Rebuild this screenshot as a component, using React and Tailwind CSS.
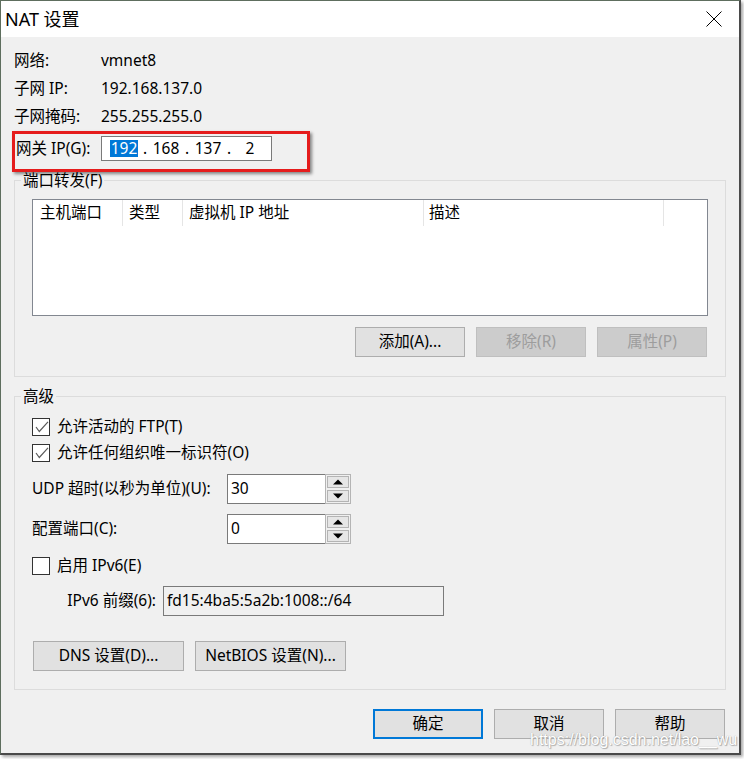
import React from 'react';

const Btn = ({ children, className = '', disabled = false, primary = false }) => (
  <div
    className={`flex h-[30px] items-center justify-center ${
      disabled
        ? 'border border-[#bfbfbf] bg-[#cccccc] text-[#9d9d9d]'
        : primary
          ? 'border-2 border-[#0078d7] bg-[#e1e1e1] text-black'
          : 'border border-[#adadad] bg-[#e1e1e1] text-black'
    } ${className}`}
  >
    {children}
  </div>
);

const Check = ({ checked, label }) => (
  <div className="flex h-[18px] items-center">
    <div className="flex h-[18px] w-[18px] shrink-0 items-center justify-center border border-[#333333] bg-white">
      {checked && (
        <svg width="16" height="16" viewBox="0 0 16 16">
          <path d="M3 8 L6.3 12.5 L15 2.8" fill="none" stroke="#5a5a5a" strokeWidth="1.2" />
        </svg>
      )}
    </div>
    <span className="ml-[7px]">{label}</span>
  </div>
);

const Spin = ({ value }) => (
  <div className="flex h-[30px]">
    <div className="h-[30px] w-[98px] border border-r-0 border-[#7a7a7a] bg-white pl-[3px] pt-[2px] leading-[22px]">
      {value}
    </div>
    <div className="flex h-[30px] w-[26px] flex-col gap-[2px] border border-[#b4b4b4] bg-[#f0f0f0] p-[1px]">
      <div className="flex flex-1 items-center justify-center border border-[#b4b4b4] bg-[#e6e6e6]">
        <svg width="10" height="6" viewBox="0 0 10 6">
          <polygon points="0,5.5 5,0.5 10,5.5" fill="#000" />
        </svg>
      </div>
      <div className="flex flex-1 items-center justify-center border border-[#b4b4b4] bg-[#e6e6e6]">
        <svg width="10" height="6" viewBox="0 0 10 6">
          <polygon points="0,0.5 10,0.5 5,5.5" fill="#000" />
        </svg>
      </div>
    </div>
  </div>
);

const InfoRow = ({ label, value }) => (
  <div className="flex h-[28px] items-center">
    <span className="w-[87px]">{label}</span>
    <span>{value}</span>
  </div>
);

export default function App() {
  return (
    <div className="relative h-[759px] w-[744px] overflow-hidden bg-white font-['Noto_Sans','Noto_Sans_CJK_SC',sans-serif] text-[15.5px] text-black">
      {/* dialog window */}
      <div className="flex h-[755px] w-[741px] flex-col border-t border-l border-b-2 border-r-2 border-t-[#5e6e5e] border-l-[#5e6e5e] border-b-[#4a4a4a] border-r-[#4a4a4a] shadow-[2px_2px_3px_rgba(0,0,0,0.35)]">
        {/* title bar */}
        <div className="flex h-[36px] shrink-0 items-center justify-between bg-white pl-[4px]">
          <span className="text-[18px]">NAT 设置</span>
          <svg className="mr-[17px]" width="16" height="16" viewBox="0 0 16 16">
            <path d="M0.5 0.5 L15.5 15.5 M15.5 0.5 L0.5 15.5" stroke="#000" strokeWidth="1" />
          </svg>
        </div>

        {/* body */}
        <div className="flex flex-1 flex-col bg-[#f0f0f0] pt-[10px]">
          <div className="ml-[13px]">
            <InfoRow label="网络:" value="vmnet8" />
            <InfoRow label="子网 IP:" value="192.168.137.0" />
            <InfoRow label="子网掩码:" value="255.255.255.0" />
          </div>

          {/* gateway, highlighted */}
          <div className="ml-[11px] flex h-[41px] w-[298px] items-start border-[3px] border-[#e51c1c] pl-[1px] pt-[2px] shadow-[2px_2px_3px_rgba(0,0,0,0.45)]">
            <span className="flex h-[25px] w-[85px] items-center">网关 IP(G):</span>
            <div className="flex h-[25px] w-[171px] items-center border border-[#7a7a7a] bg-white pl-[5px]">
              <span className="flex w-[34px] justify-center">
                <span className="bg-[#0078d7] px-[1px] leading-[17px] text-white">192</span>
              </span>
              <span className="w-[8px] text-center">.</span>
              <span className="w-[34px] text-center">168</span>
              <span className="w-[8px] text-center">.</span>
              <span className="w-[34px] text-center">137</span>
              <span className="w-[8px] text-center">.</span>
              <span className="w-[34px] text-center">2</span>
            </div>
          </div>

          {/* port forwarding */}
          <fieldset className="ml-[13px] mt-[-2px] w-[712px] border border-[#dcdcdc] pb-[19px] pl-[6px]">
            <legend className="px-[2px] leading-[20px]">端口转发(F)</legend>
            <div className="ml-[11px] mt-[9px] h-[117px] w-[676px] border border-[#828790] bg-white">
              <div className="flex h-[26px] items-center">
                <div className="flex h-[26px] w-[90px] items-center border-r border-[#e5e5e5] pl-[7px]">主机端口</div>
                <div className="flex h-[26px] w-[60px] items-center border-r border-[#e5e5e5] pl-[6px]">类型</div>
                <div className="flex h-[26px] w-[241px] items-center border-r border-[#e5e5e5] pl-[6px]">虚拟机 IP 地址</div>
                <div className="flex h-[26px] w-[240px] items-center border-r border-[#e5e5e5] pl-[5px]">描述</div>
              </div>
            </div>
            <div className="ml-[11px] mt-[11px] flex w-[676px] justify-end gap-[11px] pr-[1px]">
              <Btn className="w-[110px]">添加(A)...</Btn>
              <Btn className="w-[110px]" disabled>移除(R)</Btn>
              <Btn className="w-[110px]" disabled>属性(P)</Btn>
            </div>
          </fieldset>

          {/* advanced */}
          <fieldset className="ml-[13px] mt-[9px] w-[712px] border border-[#dcdcdc] pb-[18px] pl-[6px]">
            <legend className="px-[2px] leading-[20px]">高级</legend>
            <div className="ml-[11px] flex flex-col">
              <div className="mt-[12px]">
                <Check checked label="允许活动的 FTP(T)" />
              </div>
              <div className="mt-[8px]">
                <Check checked label="允许任何组织唯一标识符(O)" />
              </div>
              <div className="mt-[12px] flex items-center">
                <span className="w-[195px]">UDP 超时(以秒为单位)(U):</span>
                <Spin value="30" />
              </div>
              <div className="mt-[10px] flex items-center">
                <span className="w-[195px]">配置端口(C):</span>
                <Spin value="0" />
              </div>
              <div className="mt-[13px]">
                <Check label="启用 IPv6(E)" />
              </div>
              <div className="mt-[11px] flex items-center">
                <span className="w-[131px] pr-[7px] text-right">IPv6 前缀(6):</span>
                <div className="h-[30px] w-[281px] border border-[#7a7a7a] bg-[#f0f0f0] pl-[3px] leading-[26px]">
                  fd15:4ba5:5a2b:1008::/64
                </div>
              </div>
              <div className="ml-[1px] mt-[25px] flex gap-[11px]">
                <Btn className="w-[151px]">DNS 设置(D)...</Btn>
                <Btn className="w-[151px]">NetBIOS 设置(N)...</Btn>
              </div>
            </div>
          </fieldset>

          <div className="mt-[19px] flex justify-end gap-[11px] pr-[14px]">
            <Btn className="w-[110px]" primary>确定</Btn>
            <Btn className="w-[110px]">取消</Btn>
            <Btn className="w-[110px]">帮助</Btn>
          </div>
        </div>
      </div>

      {/* watermark */}
      <span className="absolute left-[530px] top-[730px] font-['Liberation_Sans',sans-serif] text-[16px] leading-[20px] text-white [text-shadow:0_0_1px_#9a9a9a,1px_1px_1px_#b0b0b0]">
        https://blog.csdn.net/lao__wu
      </span>
    </div>
  );
}
